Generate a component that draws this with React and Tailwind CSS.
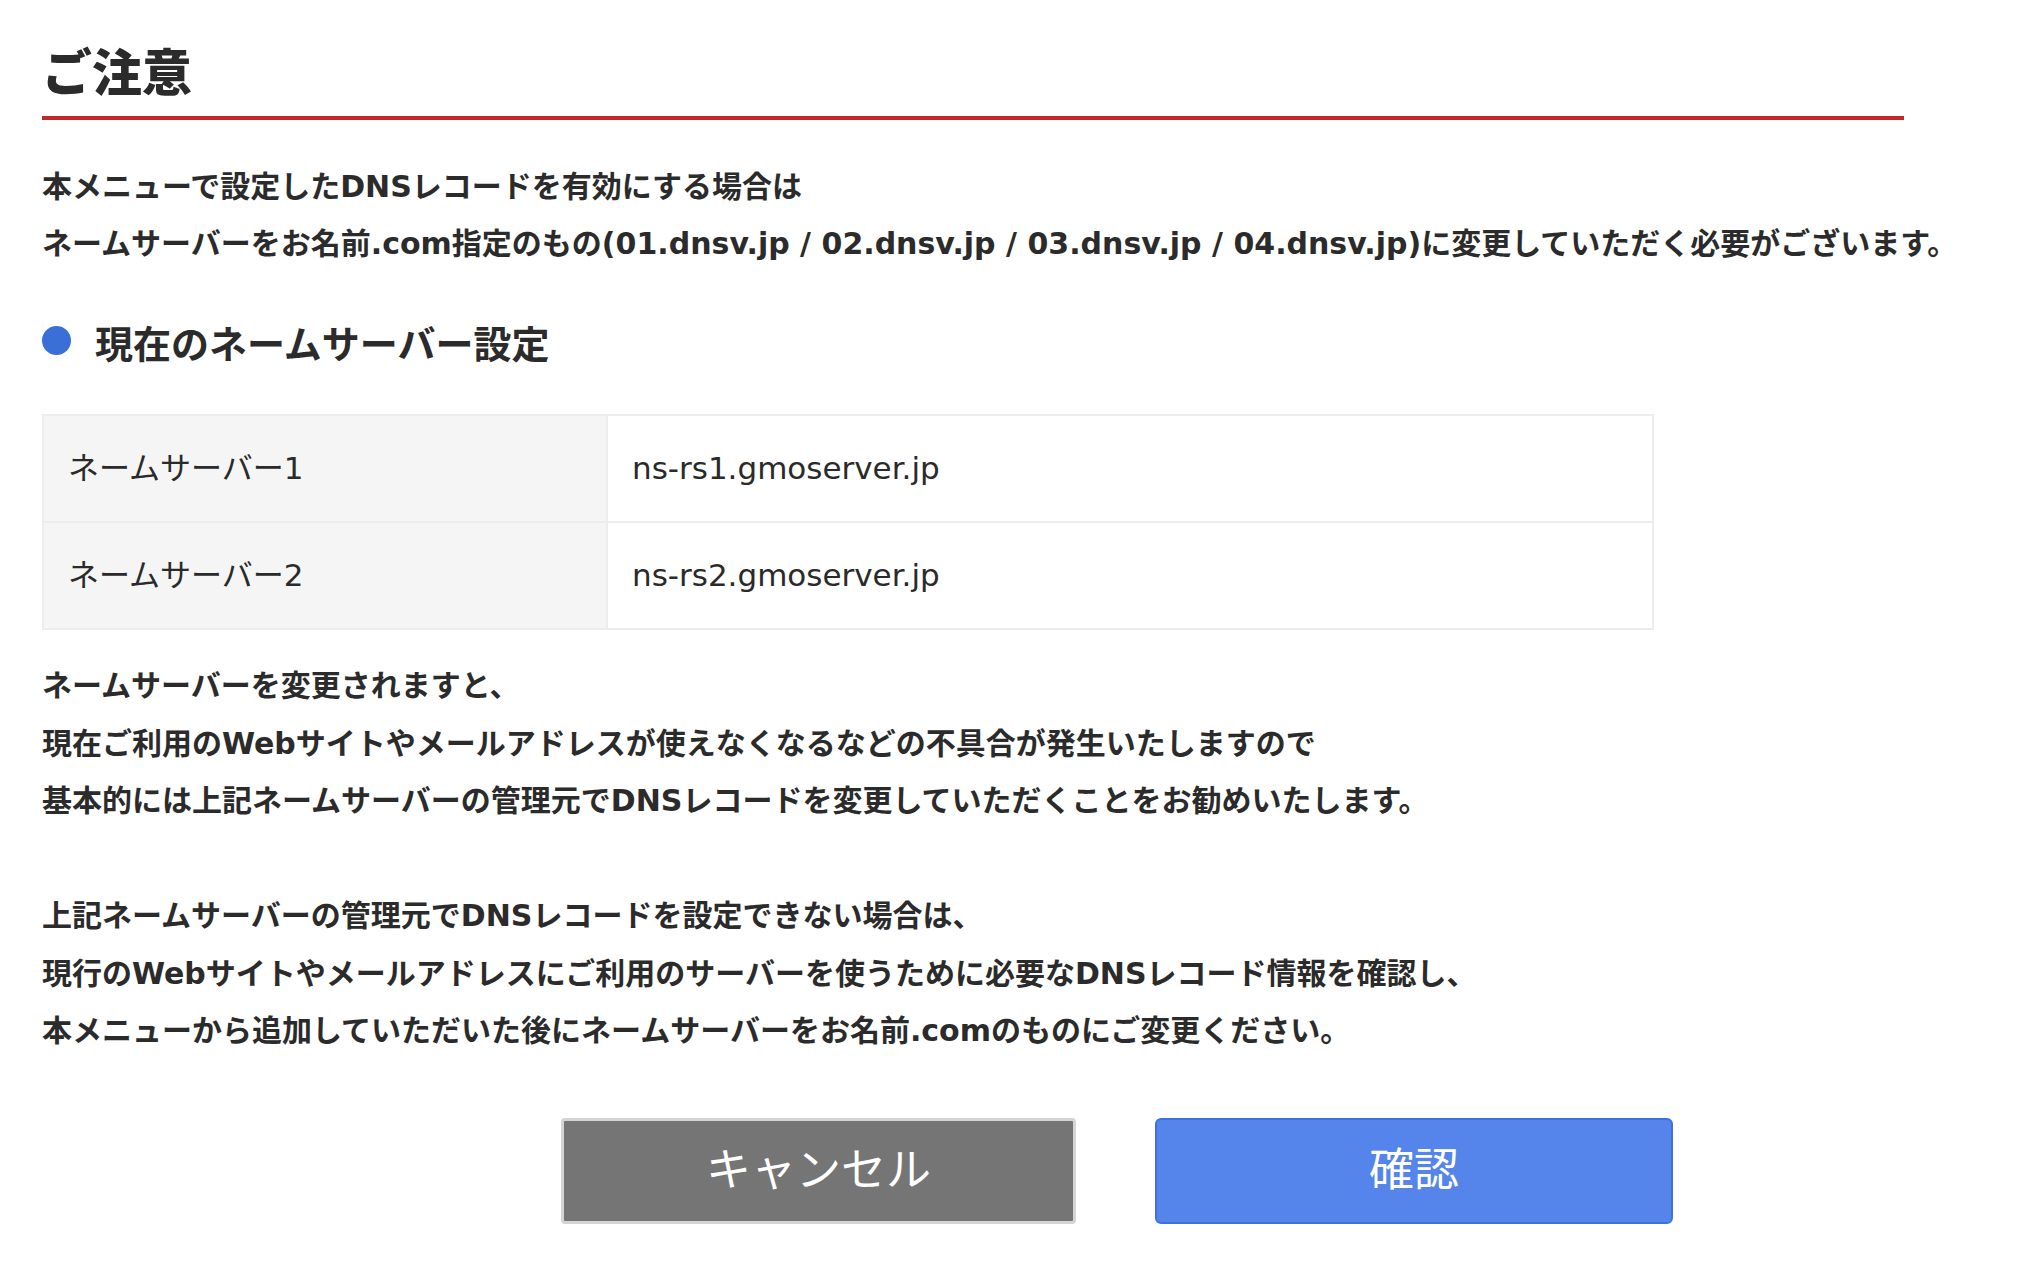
export default function App() {
  return (
    <div className="w-[2026px] h-[1262px] overflow-hidden bg-white pl-[42px] text-[#2b2b2b] font-['DejaVu_Sans','Noto_Sans_CJK_JP',sans-serif]">
      <h1 className="mt-[44px] w-[1862px] border-b-4 border-[#c1272d] pb-[12px] text-[50px] leading-[60px] font-black">
        ご注意
      </h1>

      <div className="mt-[38px] whitespace-nowrap text-[30px] leading-[57px] font-bold">
        <div>本メニューで設定したDNSレコードを有効にする場合は</div>
        <div>
          ネームサーバーをお名前.com指定のもの(01.dnsv.jp / 02.dnsv.jp / 03.dnsv.jp / 04.dnsv.jp)に変更していただく必要がございます。
        </div>
      </div>

      <div className="mt-[50px] flex h-[46px] items-center">
        <span className="mb-[10px] h-[29px] w-[29px] rounded-full bg-[#3b6fd8]" />
        <span className="ml-[24px] text-[38px] leading-[46px] font-bold">現在のネームサーバー設定</span>
      </div>

      <table className="mt-[46px] w-[1612px] border-collapse text-[31px] text-[#2a2a2a]">
        <tbody>
          <tr>
            <td className="h-[107px] w-[564px] border-2 border-[#ededed] bg-[#f5f5f5] pl-[24px]">ネームサーバー1</td>
            <td className="h-[107px] border-2 border-[#ededed] bg-white pl-[24px]">ns-rs1.gmoserver.jp</td>
          </tr>
          <tr>
            <td className="h-[107px] w-[564px] border-2 border-[#ededed] bg-[#f5f5f5] pl-[24px]">ネームサーバー2</td>
            <td className="h-[107px] border-2 border-[#ededed] bg-white pl-[24px]">ns-rs2.gmoserver.jp</td>
          </tr>
        </tbody>
      </table>

      <div className="mt-[27px] whitespace-nowrap text-[30px] leading-[57.5px] font-bold">
        <div>ネームサーバーを変更されますと、</div>
        <div>現在ご利用のWebサイトやメールアドレスが使えなくなるなどの不具合が発生いたしますので</div>
        <div>基本的には上記ネームサーバーの管理元でDNSレコードを変更していただくことをお勧めいたします。</div>
        <div className="h-[57.5px]" />
        <div>上記ネームサーバーの管理元でDNSレコードを設定できない場合は、</div>
        <div>現行のWebサイトやメールアドレスにご利用のサーバーを使うために必要なDNSレコード情報を確認し、</div>
        <div>本メニューから追加していただいた後にネームサーバーをお名前.comのものにご変更ください。</div>
      </div>

      <div className="mt-[58px] ml-[519px] flex gap-[79px]">
        <button className="h-[106px] w-[515px] rounded-[4px] border-[3px] border-[#d4d4d4] bg-[#757575] text-[45px] text-white">
          キャンセル
        </button>
        <button className="h-[106px] w-[518px] rounded-[6px] border-2 border-[#3e70e2] bg-[#5585ea] text-[45px] text-white">
          確認
        </button>
      </div>
    </div>
  );
}
